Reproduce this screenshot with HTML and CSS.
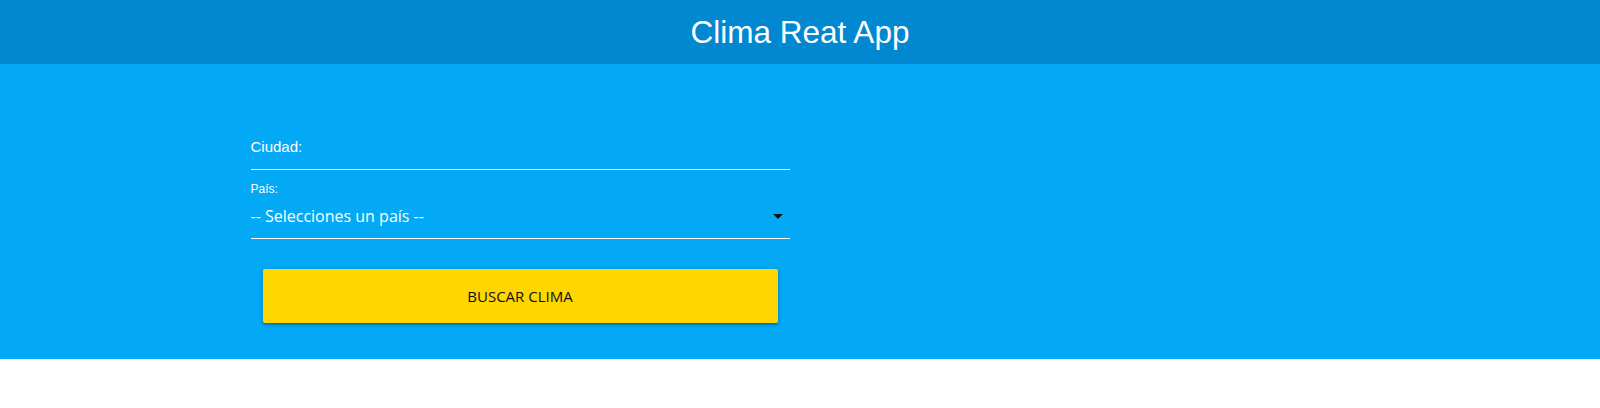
FILE: index.html
```
<!DOCTYPE html>
<html lang="es">
<head>
<meta charset="utf-8">
<title>Clima Reat App</title>
<link rel="stylesheet" href="styles.css">
</head>
<body>
<header class="topbar">
  <h1 class="brand">Clima Reat App</h1>
</header>
<main class="hero">
  <div class="container">
    <form class="col">
      <div class="field">
        <label class="label">Ciudad:</label>
      </div>
      <div class="field field-select">
        <label class="label-small">País:</label>
        <div class="select-row">
          <span class="select-text">-- Selecciones un país --</span>
          <svg class="caret" width="10" height="5" viewBox="0 0 10 5"><path d="M0 0 H10 L5 5 Z" fill="#111"/></svg>
        </div>
      </div>
      <button type="button" class="btn">BUSCAR CLIMA</button>
    </form>
  </div>
</main>
</body>
</html>
```
FILE: styles.css
```
* { box-sizing: border-box; }
html, body { margin: 0; padding: 0; background: #fff; }
body { font-family: "Open Sans", "Noto Sans", sans-serif; }

.topbar {
  height: 64px;
  background: #0288d1;
  display: flex;
  align-items: center;
  justify-content: center;
}
.brand {
  margin: 0;
  font-family: "Liberation Sans", Arial, sans-serif;
  font-weight: 400;
  font-size: 31.5px;
  line-height: 64px;
  color: #fff;
}

.hero {
  background: #03a9f4;
  padding: 66px 0 36px;
}
.container {
  width: 70%;
  margin: 0 auto;
}
.col {
  width: 50%;
  padding: 0 10.5px;
  display: flex;
  flex-direction: column;
}
.field {
  height: 40px;
  border-bottom: 1px solid #fff;
}
.label {
  display: block;
  margin-top: 7px;
  font-family: "Liberation Sans", Arial, sans-serif;
  font-size: 15px;
  line-height: 20px;
  color: #fff;
}
.field-select {
  height: auto;
  padding-top: 12px;
}
.label-small {
  display: block;
  font-family: "Liberation Sans", Arial, sans-serif;
  font-size: 12px;
  line-height: 14px;
  color: #fff;
}
.select-row {
  margin-top: 8px;
  height: 34px;
  display: flex;
  justify-content: space-between;
  align-items: flex-start;
}
.select-text {
  font-size: 16px;
  line-height: 24px;
  color: #fff;
}
.caret {
  margin-top: 10px;
  margin-right: 7px;
}
.btn {
  margin: 30px 12px 0;
  height: 54px;
  border: none;
  border-radius: 2px;
  background: #ffd600;
  color: #111;
  font-family: "Open Sans", "Noto Sans", sans-serif;
  font-size: 15px;
  padding: 0 0 1px;
  text-align: center;
  box-shadow: 0 2px 2px 0 rgba(0,0,0,0.14), 0 3px 1px -2px rgba(0,0,0,0.12), 0 1px 5px 0 rgba(0,0,0,0.2);
  cursor: pointer;
}
```
